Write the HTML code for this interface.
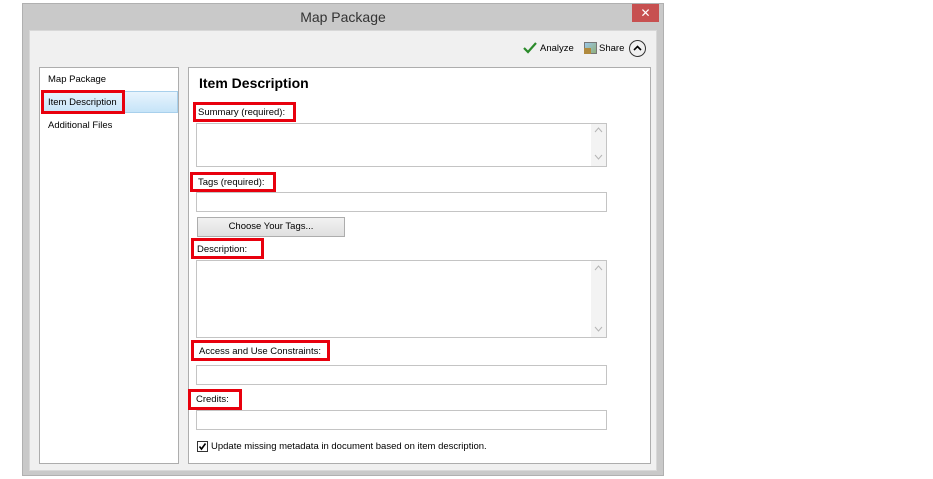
<!DOCTYPE html><html><head><style>
*{margin:0;padding:0;box-sizing:border-box}
body{width:933px;height:479px;background:#fff;position:relative;font-family:"Liberation Sans",sans-serif;font-size:9.5px;color:#000;overflow:hidden}
.a{position:absolute}
.box{position:absolute;background:#fff;border:1px solid #c4c4c4}
.red{position:absolute;border:3px solid #e8000d}
.lbl{position:absolute;font-size:9.5px}
</style></head><body>
<div class="a" style="left:22px;top:3px;width:642px;height:473px;background:#c9c9c9;border:1px solid #b0b0b0"></div>
<div class="a" style="left:0;top:9px;width:664px;text-align:center;padding-left:22px;font-size:14px;color:#333">Map Package</div>
<div class="a" style="left:632px;top:4px;width:27px;height:18px;background:#c75050;color:#fff;text-align:center;font-size:12px;line-height:18px">✕</div>
<div class="a" style="left:29px;top:30px;width:628px;height:441px;background:#f0f0f0;border:1px solid #d8d8d8"></div>
<svg class="a" style="left:523px;top:42px" width="14" height="12"><path d="M1 6 L5 10 L13 1" stroke="#2a8a2a" stroke-width="2.2" fill="none"/></svg>
<div class="a" style="left:540px;top:43px;font-size:9.5px">Analyze</div>
<div class="a" style="left:584px;top:42px;width:13px;height:12px;background:linear-gradient(135deg,#9cc8e8,#8fae7a);border:1px solid #777"></div>
<div class="a" style="left:584px;top:48px;width:7px;height:6px;background:#b08a3e"></div>
<div class="a" style="left:599px;top:43px;font-size:9.5px">Share</div>
<div class="a" style="left:629px;top:40px;width:17px;height:17px;border:1px solid #333;border-radius:50%"></div>
<svg class="a" style="left:633px;top:45px" width="9" height="6"><path d="M1 5 L4.5 1.5 L8 5" stroke="#000" stroke-width="1.6" fill="none"/></svg>
<div class="box" style="left:39px;top:67px;width:140px;height:397px;border-color:#adadad"></div>
<div class="a" style="left:41px;top:91px;width:137px;height:22px;background:linear-gradient(#e8f4fd,#c6e4f8);border:1px solid #a8d0ec"></div>
<div class="lbl" style="left:48px;top:74px">Map Package</div>
<div class="lbl" style="left:48px;top:97px">Item Description</div>
<div class="lbl" style="left:48px;top:120px">Additional Files</div>
<div class="red" style="left:41px;top:90px;width:84px;height:24px"></div>
<div class="box" style="left:188px;top:67px;width:463px;height:397px;border-color:#adadad"></div>
<div class="a" style="left:199px;top:75px;font-size:14px;font-weight:bold">Item Description</div>
<div class="lbl" style="left:198px;top:107px">Summary (required):</div>
<div class="box" style="left:196px;top:123px;width:411px;height:44px"></div>
<div class="a" style="left:591px;top:124px;width:15px;height:42px;background:#f3f3f3"></div>
<div class="lbl" style="left:198px;top:177px">Tags (required):</div>
<div class="box" style="left:196px;top:192px;width:411px;height:20px"></div>
<div class="a" style="left:197px;top:217px;width:148px;height:20px;background:linear-gradient(#f2f2f2,#e0e0e0);border:1px solid #adadad;text-align:center;line-height:18px;font-size:9.5px">Choose Your Tags...</div>
<div class="lbl" style="left:197px;top:244px">Description:</div>
<div class="box" style="left:196px;top:260px;width:411px;height:78px"></div>
<div class="a" style="left:591px;top:261px;width:15px;height:76px;background:#f3f3f3"></div>
<svg class="a" style="left:0;top:0" width="933" height="479"><g stroke="#b5b5b5" fill="none" stroke-width="1"><path d="M595 132 L598.5 128 L602 132"/><path d="M595 155 L598.5 159 L602 155"/><path d="M595 270 L598.5 266 L602 270"/><path d="M595 327 L598.5 331 L602 327"/></g></svg>
<div class="lbl" style="left:199px;top:346px">Access and Use Constraints:</div>
<div class="box" style="left:196px;top:365px;width:411px;height:20px"></div>
<div class="lbl" style="left:196px;top:394px">Credits:</div>
<div class="box" style="left:196px;top:410px;width:411px;height:20px"></div>
<div class="a" style="left:197px;top:441px;width:11px;height:11px;border:1px solid #333;background:#fff"></div>
<svg class="a" style="left:198px;top:442px" width="9" height="9"><path d="M1.5 4.5 L3.5 7 L7.5 1.5" stroke="#000" stroke-width="1.6" fill="none"/></svg>
<div class="lbl" style="left:211px;top:441px">Update missing metadata in document based on item description.</div>
<div class="red" style="left:193px;top:102px;width:103px;height:20px"></div>
<div class="red" style="left:190px;top:172px;width:86px;height:20px"></div>
<div class="red" style="left:191px;top:238px;width:73px;height:21px"></div>
<div class="red" style="left:191px;top:340px;width:139px;height:21px"></div>
<div class="red" style="left:188px;top:389px;width:54px;height:21px"></div>
</body></html>
